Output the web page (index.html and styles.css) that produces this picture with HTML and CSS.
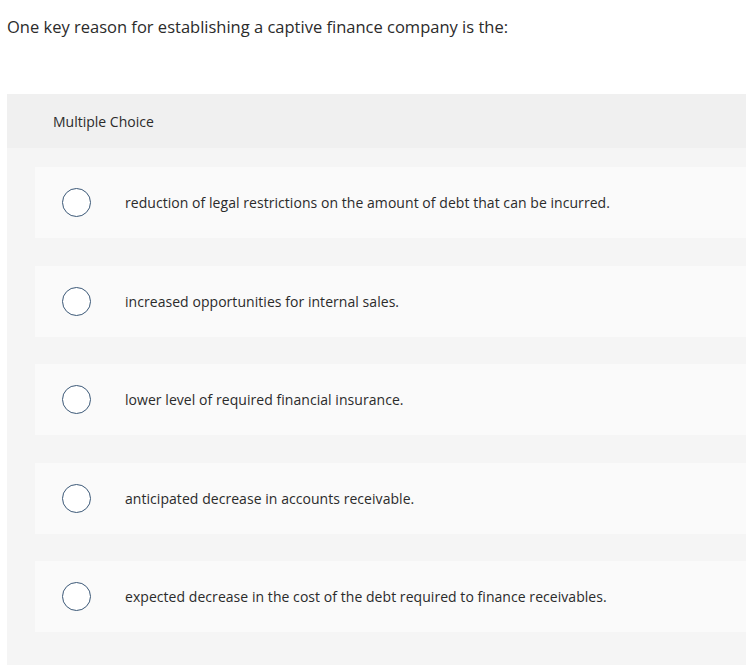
FILE: index.html
```html
<!DOCTYPE html>
<html>
<head>
<meta charset="utf-8">
<link rel="stylesheet" href="styles.css">
</head>
<body>
<p class="question">One key reason for establishing a captive finance company is the:</p>
<div class="panel">
  <div class="panel-head">Multiple Choice</div>
  <div class="panel-body">
    <div class="option"><span class="radio"></span><span class="label">reduction of legal restrictions on the amount of debt that can be incurred.</span></div>
    <div class="option"><span class="radio"></span><span class="label">increased opportunities for internal sales.</span></div>
    <div class="option"><span class="radio"></span><span class="label">lower level of required financial insurance.</span></div>
    <div class="option"><span class="radio"></span><span class="label">anticipated decrease in accounts receivable.</span></div>
    <div class="option"><span class="radio"></span><span class="label">expected decrease in the cost of the debt required to finance receivables.</span></div>
  </div>
</div>
</body>
</html>
```
FILE: styles.css
```css
html, body {
  margin: 0;
  padding: 0;
  background: #ffffff;
  overflow: hidden;
}
body {
  font-family: "Open Sans", "Liberation Sans", sans-serif;
  color: #2b2b2b;
}
.question {
  margin: 0;
  padding: 17px 0 0 7px;
  font-size: 16.5px;
  line-height: 20px;
  height: 94px;
  box-sizing: border-box;
}
.panel {
  margin-left: 7px;
  margin-right: -30px;
}
.panel-head {
  background: #f0f0f0;
  height: 54px;
  display: flex;
  align-items: center;
  padding-left: 46px;
  font-size: 14px;
  color: #2b2b2b;
}
.panel-body {
  background: #f5f5f5;
  padding: 19px 0 40px 28px;
  display: flex;
  flex-direction: column;
  gap: 27.5px;
}
.option {
  background: #fafafa;
  height: 71px;
  display: flex;
  align-items: center;
  padding-left: 27px;
}
.radio {
  width: 27px;
  height: 27px;
  border: 1.5px solid #3b5877;
  border-radius: 50%;
  background: #ffffff;
  flex: none;
}
.label {
  margin-left: 34px;
  font-size: 14px;
  letter-spacing: 0.05px;
  color: #2b2b2b;
}
```
